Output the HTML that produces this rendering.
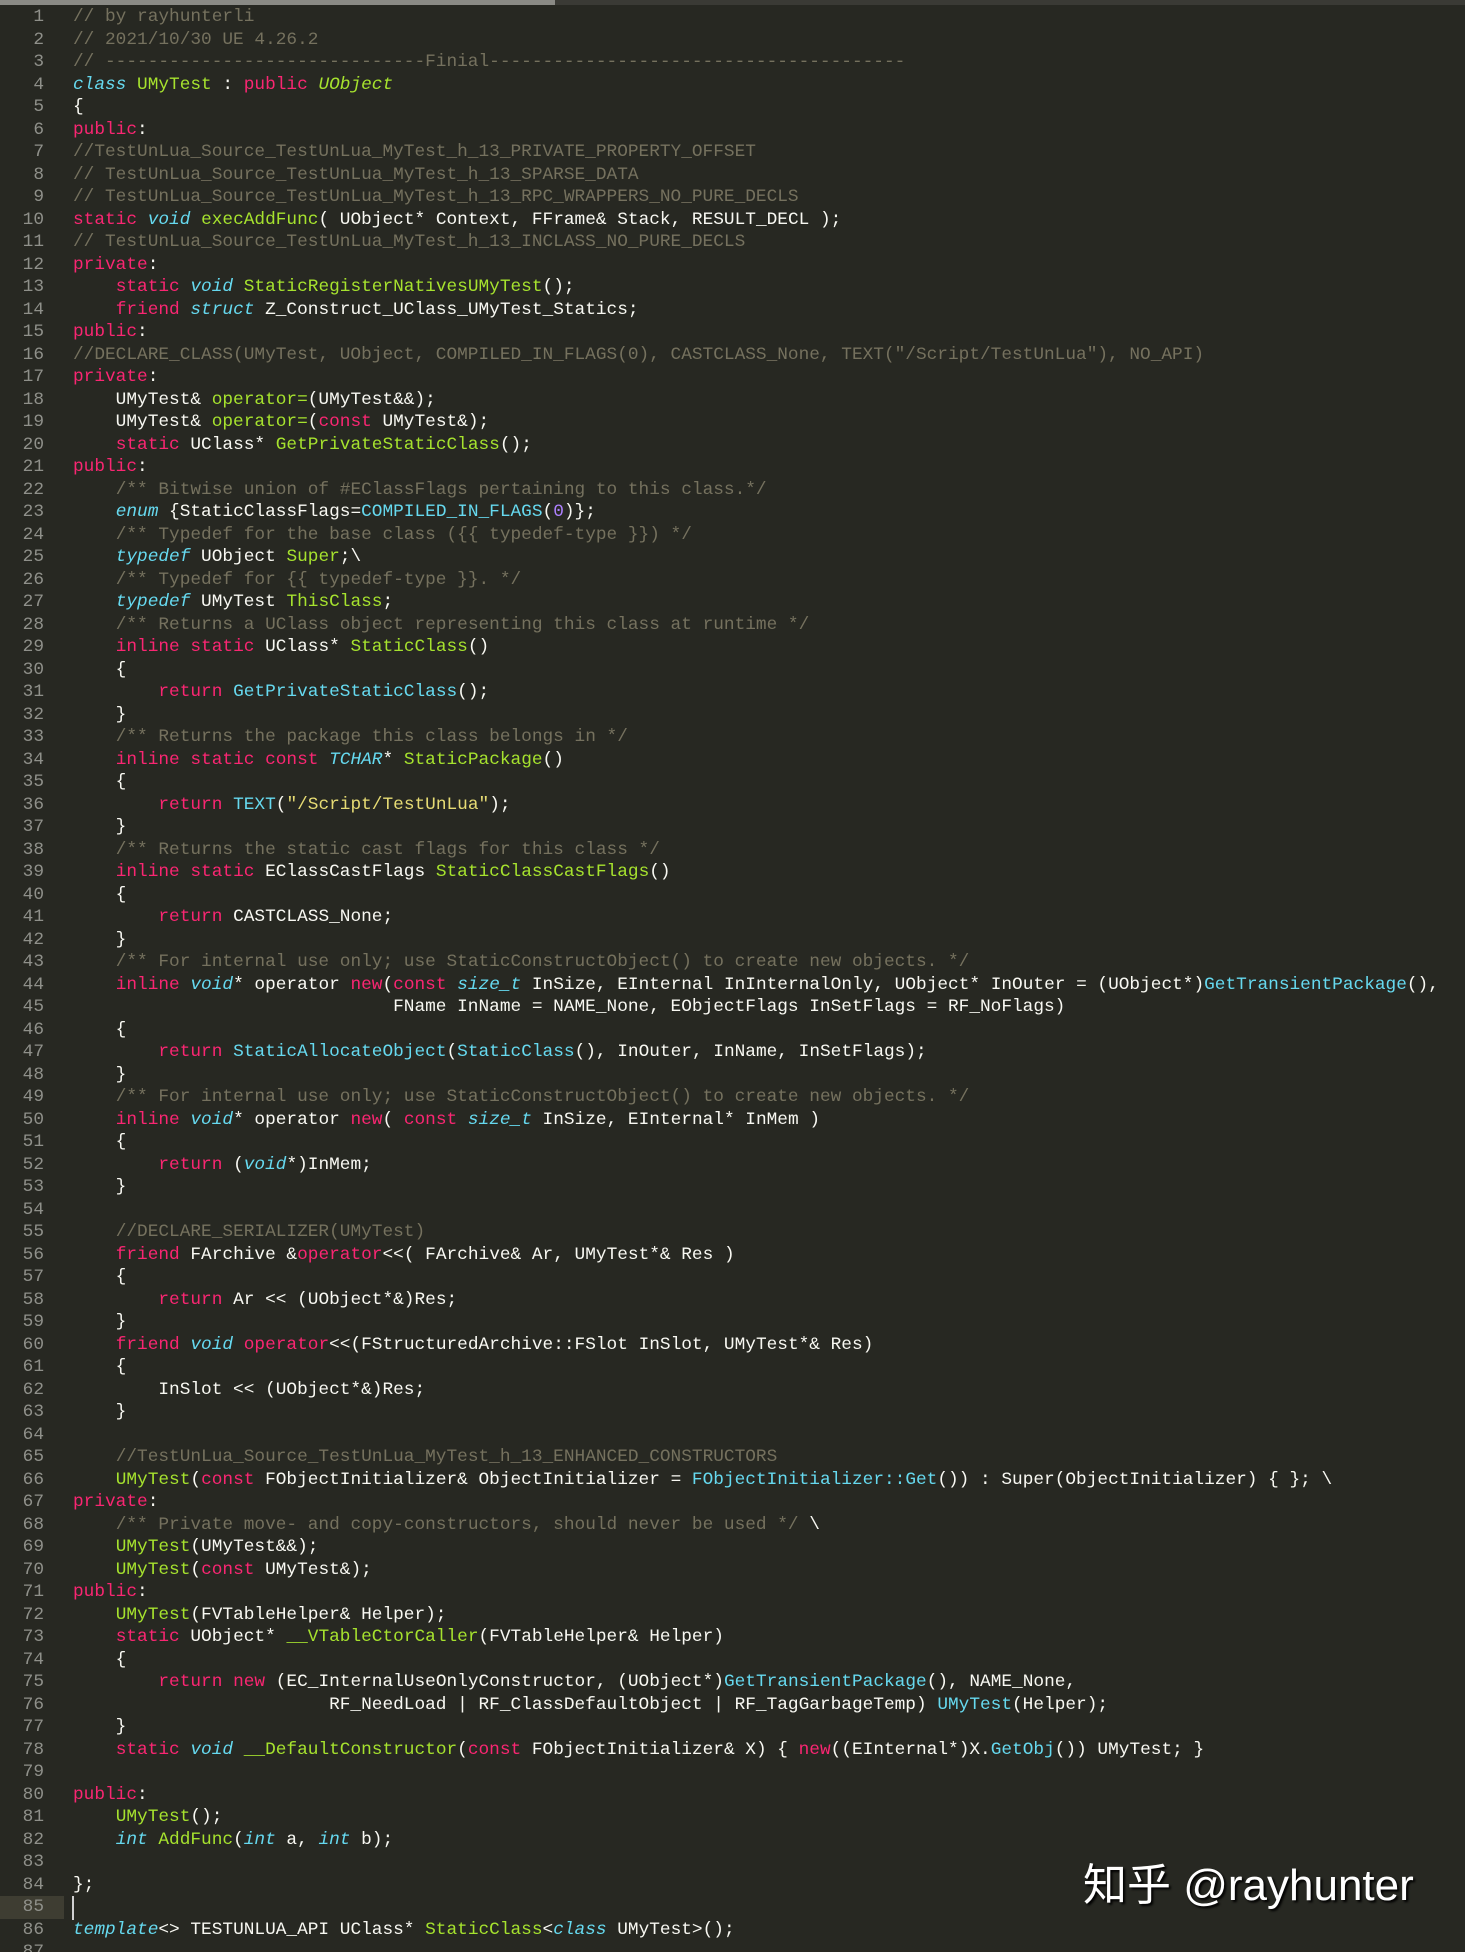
<!DOCTYPE html>
<html><head><meta charset="utf-8"><style>
html,body{margin:0;padding:0;background:#272822;width:1465px;height:1952px;overflow:hidden;position:relative}
#top{position:absolute;left:0;top:0;width:1465px;height:5px;background:#3a3a35}
#top i{position:absolute;left:0;top:0;width:555px;height:5px;background:#8a8a85}
#g{position:absolute;left:0;top:6px;width:44px;text-align:right;font:17.8px/22.5px "Liberation Mono",monospace;color:#8f908a;margin:0}
#c{position:absolute;left:73px;top:6px;font:17.8px/22.5px "Liberation Mono",monospace;color:#f8f8f2;margin:0;white-space:pre}
.hl{position:absolute;left:0;width:64px;height:22.5px;background:#3e3d32}
.cur{position:absolute;left:72px;width:2px;height:24px;background:#d0d0d0}
.c{color:#75715e}.k{color:#f92672}.t{color:#66d9ef;font-style:italic}.f{color:#a6e22e}.g{color:#a6e22e;font-style:italic}.n{color:#ae81ff}.s{color:#e6db74}.b{color:#66d9ef}
#wm{position:absolute;left:1083px;top:1858px;font:44px/56px "Liberation Sans","Noto Sans CJK SC",sans-serif;color:#fff;text-shadow:2px 2px 2px #000}
</style></head><body>
<div id="top"><i></i></div>
<div class="hl" style="top:1896px"></div>
<div class="cur" style="top:1896px"></div>
<pre id="g">1
2
3
4
5
6
7
8
9
10
11
12
13
14
15
16
17
18
19
20
21
22
23
24
25
26
27
28
29
30
31
32
33
34
35
36
37
38
39
40
41
42
43
44
45
46
47
48
49
50
51
52
53
54
55
56
57
58
59
60
61
62
63
64
65
66
67
68
69
70
71
72
73
74
75
76
77
78
79
80
81
82
83
84
85
86
87</pre>
<pre id="c"><span class="c">// by rayhunterli</span>
<span class="c">// 2021/10/30 UE 4.26.2</span>
<span class="c">// ------------------------------Finial---------------------------------------</span>
<span class="t">class</span> <span class="f">UMyTest</span> : <span class="k">public</span> <span class="g">UObject</span>
{
<span class="k">public</span>:
<span class="c">//TestUnLua_Source_TestUnLua_MyTest_h_13_PRIVATE_PROPERTY_OFFSET</span>
<span class="c">// TestUnLua_Source_TestUnLua_MyTest_h_13_SPARSE_DATA</span>
<span class="c">// TestUnLua_Source_TestUnLua_MyTest_h_13_RPC_WRAPPERS_NO_PURE_DECLS</span>
<span class="k">static</span> <span class="t">void</span> <span class="f">execAddFunc</span>( UObject* Context, FFrame&amp; Stack, RESULT_DECL );
<span class="c">// TestUnLua_Source_TestUnLua_MyTest_h_13_INCLASS_NO_PURE_DECLS</span>
<span class="k">private</span>:
    <span class="k">static</span> <span class="t">void</span> <span class="f">StaticRegisterNativesUMyTest</span>();
    <span class="k">friend</span> <span class="t">struct</span> Z_Construct_UClass_UMyTest_Statics;
<span class="k">public</span>:
<span class="c">//DECLARE_CLASS(UMyTest, UObject, COMPILED_IN_FLAGS(0), CASTCLASS_None, TEXT("/Script/TestUnLua"), NO_API)</span>
<span class="k">private</span>:
    UMyTest&amp; <span class="f">operator=</span>(UMyTest&amp;&amp;);
    UMyTest&amp; <span class="f">operator=</span>(<span class="k">const</span> UMyTest&amp;);
    <span class="k">static</span> UClass* <span class="f">GetPrivateStaticClass</span>();
<span class="k">public</span>:
    <span class="c">/** Bitwise union of #EClassFlags pertaining to this class.*/</span>
    <span class="t">enum</span> {StaticClassFlags=<span class="b">COMPILED_IN_FLAGS</span>(<span class="n">0</span>)};
    <span class="c">/** Typedef for the base class ({{ typedef-type }}) */</span>
    <span class="t">typedef</span> UObject <span class="f">Super</span>;\
    <span class="c">/** Typedef for {{ typedef-type }}. */</span>
    <span class="t">typedef</span> UMyTest <span class="f">ThisClass</span>;
    <span class="c">/** Returns a UClass object representing this class at runtime */</span>
    <span class="k">inline</span> <span class="k">static</span> UClass* <span class="f">StaticClass</span>()
    {
        <span class="k">return</span> <span class="b">GetPrivateStaticClass</span>();
    }
    <span class="c">/** Returns the package this class belongs in */</span>
    <span class="k">inline</span> <span class="k">static</span> <span class="k">const</span> <span class="t">TCHAR</span>* <span class="f">StaticPackage</span>()
    {
        <span class="k">return</span> <span class="b">TEXT</span>(<span class="s">"/Script/TestUnLua"</span>);
    }
    <span class="c">/** Returns the static cast flags for this class */</span>
    <span class="k">inline</span> <span class="k">static</span> EClassCastFlags <span class="f">StaticClassCastFlags</span>()
    {
        <span class="k">return</span> CASTCLASS_None;
    }
    <span class="c">/** For internal use only; use StaticConstructObject() to create new objects. */</span>
    <span class="k">inline</span> <span class="t">void</span>* operator <span class="k">new</span>(<span class="k">const</span> <span class="t">size_t</span> InSize, EInternal InInternalOnly, UObject* InOuter = (UObject*)<span class="b">GetTransientPackage</span>(),
                              FName InName = NAME_None, EObjectFlags InSetFlags = RF_NoFlags)
    {
        <span class="k">return</span> <span class="b">StaticAllocateObject</span>(<span class="b">StaticClass</span>(), InOuter, InName, InSetFlags);
    }
    <span class="c">/** For internal use only; use StaticConstructObject() to create new objects. */</span>
    <span class="k">inline</span> <span class="t">void</span>* operator <span class="k">new</span>( <span class="k">const</span> <span class="t">size_t</span> InSize, EInternal* InMem )
    {
        <span class="k">return</span> (<span class="t">void</span>*)InMem;
    }

    <span class="c">//DECLARE_SERIALIZER(UMyTest)</span>
    <span class="k">friend</span> FArchive &amp;<span class="k">operator</span>&lt;&lt;( FArchive&amp; Ar, UMyTest*&amp; Res )
    {
        <span class="k">return</span> Ar &lt;&lt; (UObject*&amp;)Res;
    }
    <span class="k">friend</span> <span class="t">void</span> <span class="k">operator</span>&lt;&lt;(FStructuredArchive::FSlot InSlot, UMyTest*&amp; Res)
    {
        InSlot &lt;&lt; (UObject*&amp;)Res;
    }

    <span class="c">//TestUnLua_Source_TestUnLua_MyTest_h_13_ENHANCED_CONSTRUCTORS</span>
    <span class="f">UMyTest</span>(<span class="k">const</span> FObjectInitializer&amp; ObjectInitializer = <span class="b">FObjectInitializer::Get</span>()) : Super(ObjectInitializer) { }; \
<span class="k">private</span>:
    <span class="c">/** Private move- and copy-constructors, should never be used */</span> \
    <span class="f">UMyTest</span>(UMyTest&amp;&amp;);
    <span class="f">UMyTest</span>(<span class="k">const</span> UMyTest&amp;);
<span class="k">public</span>:
    <span class="f">UMyTest</span>(FVTableHelper&amp; Helper);
    <span class="k">static</span> UObject* <span class="f">__VTableCtorCaller</span>(FVTableHelper&amp; Helper)
    {
        <span class="k">return</span> <span class="k">new</span> (EC_InternalUseOnlyConstructor, (UObject*)<span class="b">GetTransientPackage</span>(), NAME_None,
                        RF_NeedLoad | RF_ClassDefaultObject | RF_TagGarbageTemp) <span class="b">UMyTest</span>(Helper);
    }
    <span class="k">static</span> <span class="t">void</span> <span class="f">__DefaultConstructor</span>(<span class="k">const</span> FObjectInitializer&amp; X) { <span class="k">new</span>((EInternal*)X.<span class="b">GetObj</span>()) UMyTest; }

<span class="k">public</span>:
    <span class="f">UMyTest</span>();
    <span class="t">int</span> <span class="f">AddFunc</span>(<span class="t">int</span> a, <span class="t">int</span> b);

};

<span class="t">template</span>&lt;&gt; TESTUNLUA_API UClass* <span class="f">StaticClass</span>&lt;<span class="t">class</span> UMyTest&gt;();</pre>
<div id="wm">知乎 @rayhunter</div>
</body></html>
